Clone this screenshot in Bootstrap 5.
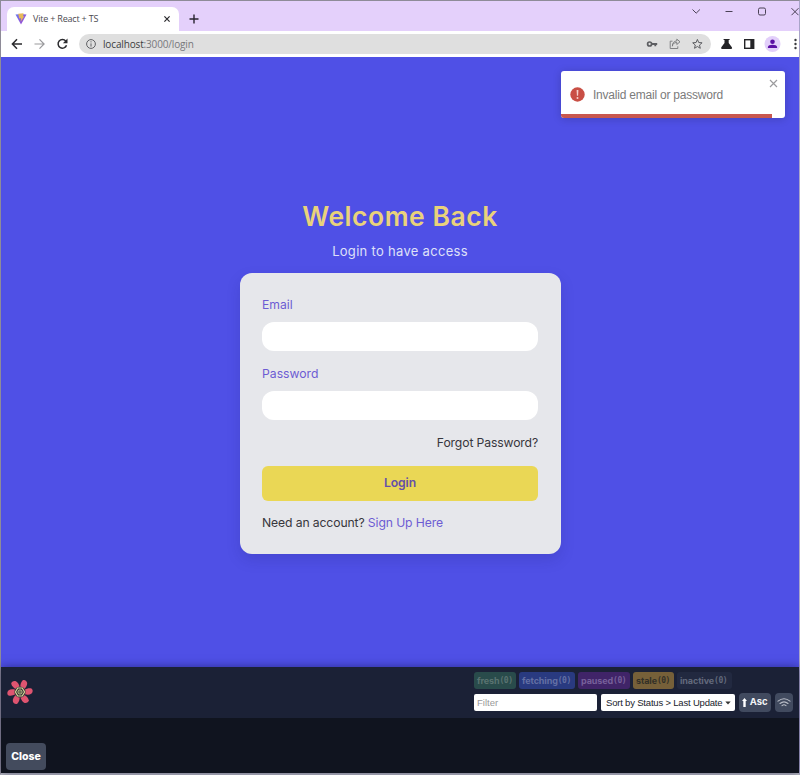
<!DOCTYPE html>
<html lang="en">
<head>
<meta charset="utf-8">
<meta name="viewport" content="width=device-width, initial-scale=1">
<title>Vite + React + TS</title>
<link href="https://cdn.jsdelivr.net/npm/bootstrap@5.3.0/dist/css/bootstrap.min.css" rel="stylesheet">
<style>
body{font-family:Inter,"Open Sans",sans-serif;font-size:12.2px;line-height:18px;overflow:hidden;background:#4f50e6}
svg{display:block;flex:none}
.browser{width:800px;height:775px;border:1px solid #8e8b98;border-right-color:#a9a5c9;border-bottom:2px solid #b9bac2;background:#10141f}
.tabstrip{height:30px;background:#e4d0fb;font-family:"Open Sans",sans-serif;padding-left:6px}
.tab{width:172px;height:24px;background:#fff;border-radius:7px 7px 0 0;margin-top:6px;padding:0 8px 0 8px;font-size:9px;color:#4c4a50}
.tab-name{margin-left:6px;letter-spacing:-.2px}
.newtab{margin:13px 0 0 10px}
.winctl{margin-left:auto;padding:5px 0 0}
.toolbar-row{height:26px;background:#fff;font-family:"Open Sans",sans-serif;padding-left:10px;color:#3c3c40}
.address{width:632px;height:20px;border-radius:10px;background:#dfdfdf;margin-left:10px;padding:0 7px 0 7px;font-size:10px;letter-spacing:-.15px}
.address .path{color:#77777b}
.address .url{margin-left:7px}
.page{background:#4f50e6;height:610px;position:relative}
.notice{position:absolute;left:560px;top:14px;width:224px;height:47px;background:#fff;border-radius:3px;box-shadow:0 1px 8px rgba(0,0,0,.18);overflow:hidden;font-family:"Liberation Sans",sans-serif;font-size:12px;letter-spacing:-.22px;color:#7b7b7b;padding:0 0 0 9px}
.notice .dismiss{position:absolute;right:7px;top:8px}
.notice .timer{position:absolute;left:0;bottom:0;height:4px;width:211px;background:#c8574f}
.heading{font-size:26.5px;line-height:36px;font-weight:600;color:#e9d27b;margin:141px 0 0;letter-spacing:.53px}
.subhead{font-size:13px;line-height:20px;color:#dfe0f8;margin-top:7px;letter-spacing:.3px}
.panel{width:321px;height:281px;margin-top:12px;padding:22px 22.5px;background:#e6e7eb;border-radius:12px;box-shadow:0 6px 14px rgba(30,30,110,.17)}
.lbl{color:#6d5cd3;margin:0 0 9px;line-height:18px}
.lbl span{position:relative;top:.5px}
.field{height:29px;border:0;border-radius:12px;background:#fff;padding:0 12px}
.gap-field{margin-top:13px}
.forgot{color:#37363c;margin-top:14px;letter-spacing:-.13px}
.btn-login{height:35px;background:#ead755;border-radius:6px;color:#6550a9;font-weight:600;font-size:12.2px;letter-spacing:-.1px;padding:0;margin-top:14px;border:0}
.signup{color:#37363c;margin-top:13px;letter-spacing:-.12px}
.signup a{color:#6d5cd3}
.dev{flex:1;background:#10141f;position:relative;box-shadow:0 0 9px rgba(10,10,60,.5)}
.devbar{height:51px;background:#1b2136;padding:5px 5px 0 5px}
.flower{margin-top:7px}
.devright{width:320px}
.chips{gap:3px}
.chip{height:17px;border-radius:3px;font-size:9px;font-weight:700;line-height:17px;padding:0 3px;white-space:nowrap;display:flex;letter-spacing:-.1px}
.chip code{font-size:8px;font-family:"DejaVu Sans Mono",monospace;color:inherit;letter-spacing:-.5px;line-height:17px}
.c1{width:42px;background:#294b4b;color:#5a7371}.c2{width:56px;background:#293a80;color:#6470a4}
.c3{width:52px;background:#402468;color:#77609a}.c4{width:41px;background:#766039;color:#333027}
.c5{width:55px;background:#222940;color:#626a7c}
.filter{width:123px;height:17px;background:#fff;border:0;border-radius:2px;padding:0 3px;font:9.5px "Liberation Sans",sans-serif}
.filter::placeholder{color:#999;opacity:1}
.sort{width:134px;height:17px;background:#fff;border-radius:2px;color:#20232b;font:9.5px/17px "Liberation Sans",sans-serif;letter-spacing:-.19px;padding:0 4px 0 5px;white-space:nowrap}
.keybtn{height:19px;background:#414a5f;border-radius:4px;border:0;color:#f3f4f7;font-size:9.5px;font-weight:700;padding:0}
.key-order{width:32px}.key-online{width:18px}
.btn-close-dev{margin:25px 0 0 5px;width:40px;height:27px;background:#434b5d;border-radius:4px;color:#fff;font-size:10.5px;font-weight:800;padding:0;border:0}
</style>
</head>
<body>
<div class="browser d-flex flex-column">
  <header class="tabstrip d-flex align-items-start">
    <div class="tab d-flex align-items-center">
      <svg width="12" height="12" viewBox="0 0 12 12"><defs><linearGradient id="v" x1="0" y1="0" x2="1" y2="1"><stop stop-color="#6b7cf0"/><stop offset="1" stop-color="#a340cf"/></linearGradient></defs><path d="M.5 1.5 6 .9l5.5.6L6 11.6z" fill="url(#v)"/><path d="m3.2.8 5.300-.5-.4 3 1.200-.1-3.600 5.600.4-3.500-1.800.3z" fill="#e6b95a"/></svg>
      <span class="tab-name">Vite + React + TS</span>
      <svg class="ms-auto" width="8" height="8" viewBox="0 0 8 8" stroke="#29282c" stroke-width="1.200"><path d="m1.400 1.400 5.200 5.200m0-5.200L1.400 6.600"/></svg>
    </div>
    <svg class="newtab" width="10" height="10" viewBox="0 0 10 10" stroke="#29242f" stroke-width="1.4"><path d="M5 .5v9M.5 5h9"/></svg>
    <div class="winctl">
      <svg width="110" height="11" viewBox="0 0 110 11" fill="none" stroke="#4b4256"><path d="m3.5 3.500 3.700 3.700 3.700-3.700M36.500 5.500h7"/><rect x="69.500" y="2" width="7" height="7" rx="1.500"/><path d="m102.500 2.200 7 7m0-7-7 7"/></svg>
    </div>
  </header>
  <div class="toolbar-row d-flex align-items-center">
    <svg width="58" height="14" viewBox="0 0 58 14" fill="none" stroke-width="1.5"><path d="M11 7H1.500M6 2.300 1.400 7 6 11.700" stroke="#2b2b2e"/><path d="M23.500 7H33m-4.500-4.700L33.100 7l-4.600 4.700" stroke="#99999c" stroke-width="1.200"/><path d="M54.800 4.200a4.300 4.300 0 1 0 .7 4" stroke="#2b2b2e"/><path d="M56.500 1.600v4.600h-4.600z" fill="#2b2b2e"/></svg>
    <div class="address d-flex align-items-center">
      <svg width="10" height="10" viewBox="0 0 10 10" fill="none" stroke="#5f6064"><circle cx="5" cy="5" r="4.4"/><path d="M5 4.400v3.200M5 2.300v1.100"/></svg>
      <span class="url">localhost<span class="path">:3000/login</span></span>
      <svg class="ms-auto" width="58" height="12" viewBox="0 0 58 12" fill="none" stroke="#5d5e62"><circle cx="3.600" cy="6" r="2" stroke-width="1.700"/><path d="M5.600 6h5.600M9.300 6v2.200" stroke-width="1.800"/><path d="M26.500 3.200h-2.300v7.300h7.600V8.300M26.400 8.200c.2-2.500 1.600-3.600 4.400-3.700v2L34 3.800l-3.200-2.700v1.800c-3 .2-4.400 2.100-4.400 5.300z" stroke="#77787b" stroke-width=".9"/><path d="m51.400 1.400 1.300 3.100 3.400.3-2.600 2.200.8 3.300-2.900-1.800-2.900 1.800.8-3.300-2.600-2.200 3.400-.3z"/></svg>
    </div>
    <svg class="ms-auto" width="79" height="16" viewBox="0 0 79 16"><path d="M3.600 3h6v1.100h-.9v2.800l3.200 4.400q.8 1.600-.8 1.700h-9q-1.600-.1-.8-1.700l3.200-4.400V4.100H3.600z" fill="#242427"/><rect x="24.700" y="3.700" width="9" height="8.600" fill="#fff" stroke="#242427" stroke-width="1.400"/><path d="M30.300 4h3.400v8h-3.400z" fill="#242427"/><circle cx="52.500" cy="8" r="8" fill="#e2cffa"/><circle cx="52.500" cy="5.700" r="2.300" fill="#5b0fa4"/><path d="M47.900 12v-1.100c0-3 9.200-3 9.200 0V12z" fill="#5b0fa4"/><g fill="#3a3a3e"><circle cx="75.500" cy="4" r="1.200"/><circle cx="75.500" cy="8" r="1.200"/><circle cx="75.500" cy="12" r="1.200"/></g></svg>
  </div>
  <main class="page d-flex flex-column align-items-center">
    <div class="notice d-flex align-items-center" role="alert">
      <svg width="15" height="15" viewBox="0 0 15 15"><circle cx="7.500" cy="7.500" r="7.200" fill="#c94f45"/><path d="M6.600 3h1.800l-.3 5.700H6.900z" fill="#f5d0cb"/><circle cx="7.500" cy="11" r="1" fill="#f5d0cb"/></svg>
      <span class="notice-text ms-2">Invalid email or password</span>
      <svg class="dismiss" width="9" height="9" viewBox="0 0 9 9" stroke="#9b9b9d" stroke-width="1.200"><path d="m1 1 7 7m0-7L1 8"/></svg>
      <div class="timer"></div>
    </div>
    <h1 class="heading">Welcome Back</h1>
    <div class="subhead">Login to have access</div>
    <form class="panel d-flex flex-column">
      <label class="lbl" for="email"><span>Email</span></label>
      <input class="field w-100" id="email" type="email">
      <label class="lbl gap-field" for="pw"><span>Password</span></label>
      <input class="field w-100" id="pw" type="password">
      <div class="forgot text-end">Forgot Password?</div>
      <button class="btn btn-login w-100" type="button">Login</button>
      <div class="signup">Need an account? <a class="text-decoration-none" href="#">Sign Up Here</a></div>
    </form>
  </main>
  <footer class="dev">
    <div class="devbar d-flex justify-content-between align-items-start">
      <svg class="flower" width="28" height="26" viewBox="-14 -13 28 26"><defs><path id="petal" d="M-2.300-4.500C-3.600-7-4.100-9-3.500-11.500-2.300-13.300.5-13 1.800-11.300 3-9.500 2.800-7 2.300-4.500z" fill="#df5470"/></defs><use href="#petal" transform="rotate(30)"/><use href="#petal" transform="rotate(90)"/><use href="#petal" transform="rotate(150)"/><use href="#petal" transform="rotate(210)"/><use href="#petal" transform="rotate(270)"/><use href="#petal" transform="rotate(330)"/><circle r="5.600" fill="#30333a"/><path d="m-4.600 0 2.300-4h4.600l2.300 4-2.300 4h-4.600z" fill="none" stroke="#d6d393" stroke-width="1.200"/><circle r="2.100" fill="none" stroke="#c8c987"/><circle r=".7" fill="#d6d393"/></svg>
      <div class="devright d-flex flex-column">
        <div class="chips d-flex"><span class="chip c1">fresh<code>(0)</code></span><span class="chip c2">fetching<code>(0)</code></span><span class="chip c3">paused<code>(0)</code></span><span class="chip c4">stale<code>(0)</code></span><span class="chip c5">inactive<code>(0)</code></span></div>
        <div class="d-flex align-items-center mt-1 gap-1">
          <input class="filter" placeholder="Filter" aria-label="Filter">
          <div class="sort d-flex align-items-center justify-content-between"><span class="sort-text">Sort by Status &gt; Last Update</span><svg width="6" height="4" viewBox="0 0 6 4"><path d="M.3.500h5.400L3 3.500z" fill="#333"/></svg></div>
          <button class="btn keybtn key-order d-flex align-items-center justify-content-center"><svg width="5" height="9" viewBox="0 0 5 9"><path d="M2.500 0 5 3H3.700v6H1.300V3H0z" fill="#fff"/></svg><span class="asc">&nbsp;Asc</span></button>
          <button class="btn keybtn key-online d-flex align-items-center justify-content-center" aria-label="Online"><svg width="14" height="11" viewBox="0 0 14 11" fill="none" stroke="#b9bdc7" stroke-width="1.100" stroke-linecap="round"><path d="M1 4.200q6-5 12 0M3 6.500q4-3.300 8 0M5 8.600q2-1.600 4 0"/></svg></button>
        </div>
      </div>
    </div>
    <button class="btn btn-close-dev">Close</button>
  </footer>
</div>
<script src="https://cdn.jsdelivr.net/npm/bootstrap@5.3.0/dist/js/bootstrap.bundle.min.js"></script>
</body>
</html>
